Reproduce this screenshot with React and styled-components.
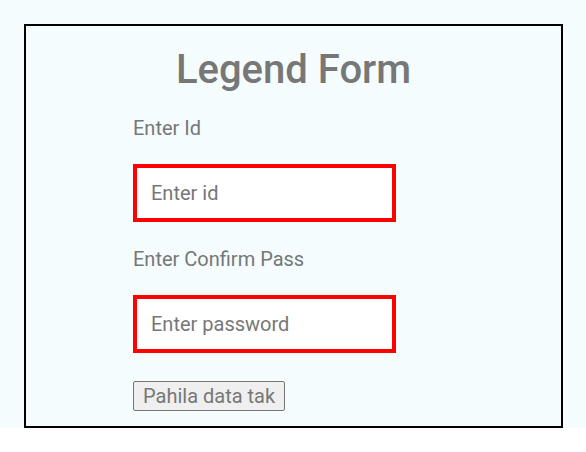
import React from "react";
import styled, { createGlobalStyle } from "styled-components";

const Global = createGlobalStyle`
  html, body { margin: 0; padding: 0; background: #ffffff; }
  * { box-sizing: border-box; }
`;

const Page = styled.div`
  background: #f4fcfd;
  padding: 24px 23px 0 24px;
  font-family: Roboto, "Liberation Sans", sans-serif;
  color: #777777;
`;

const Box = styled.div`
  border: 2px solid #000;
  padding: 20px 0 15px 107px;
  display: flex;
  flex-direction: column;
  align-items: flex-start;
`;

const Title = styled.h1`
  align-self: stretch;
  margin: 0 0 0 -107px;
  text-align: center;
  font-size: 40px;
  font-weight: 500;
  line-height: normal;
  color: #777777;
`;

const Label = styled.label`
  display: block;
  font-size: 20px;
  line-height: normal;
  margin-top: ${(p) => p.$top}px;
`;

const Input = styled.input`
  display: block;
  width: 263px;
  height: 58px;
  margin-top: 24px;
  border: 4px solid #ff0000;
  background: #ffffff;
  padding: 0 0 0 14px;
  font-family: Roboto, "Liberation Sans", sans-serif;
  font-size: 20px;
  color: #777777;
  outline: none;
  &::placeholder { color: #777777; opacity: 1; }
`;

const Button = styled.button`
  margin-top: 28px;
  height: 30px;
  padding: 0 9px;
  border: 1px solid #767676;
  border-radius: 2px;
  background: #efefef;
  font-family: Roboto, "Liberation Sans", sans-serif;
  font-size: 20px;
  color: #777777;
`;

export default function App() {
  return (
    <>
      <Global />
      <Page>
        <Box>
          <Title>Legend Form</Title>
          <Label $top={23}>Enter Id</Label>
          <Input placeholder="Enter id" />
          <Label $top={25}>Enter Confirm Pass</Label>
          <Input type="password" placeholder="Enter password" />
          <Button>Pahila data tak</Button>
        </Box>
      </Page>
    </>
  );
}
